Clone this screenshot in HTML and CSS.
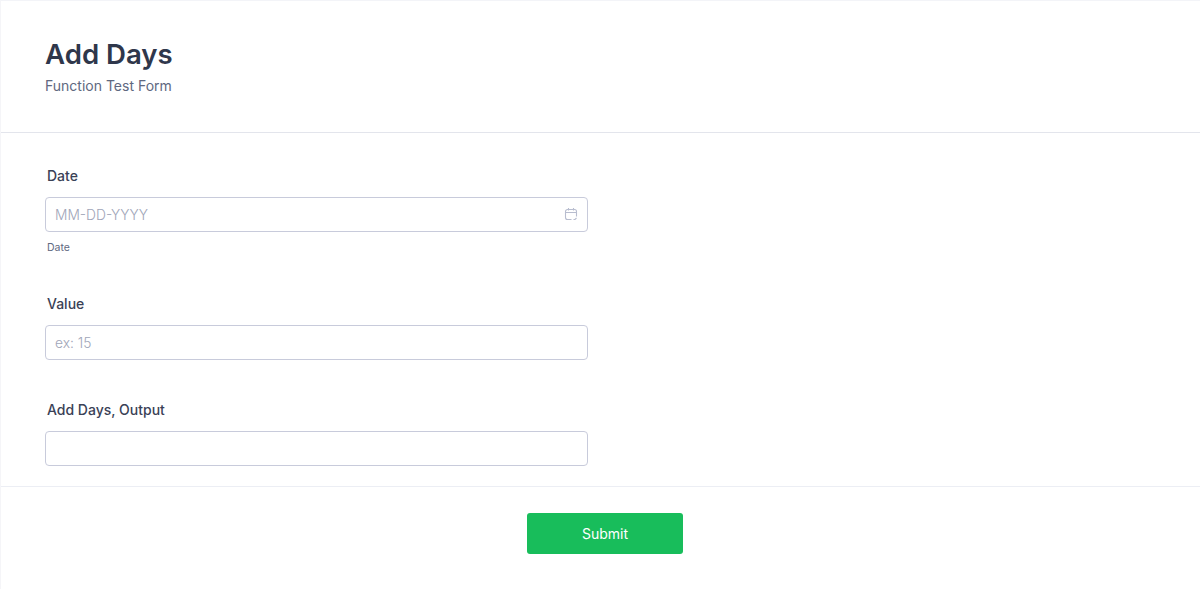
FILE: index.html
```html
<!DOCTYPE html>
<html lang="en">

<head>
    <meta charset="UTF-8">
    <meta name="viewport" content="width=device-width, initial-scale=1.0">
    <title>Add Days</title>
    <link rel="stylesheet" href="styles.css">
</head>

<body>
    <form class="form-box">
        <div class="form-header">
            <h1>Add Days</h1>
            <p>Function Test Form</p>
        </div>

        <div class="form-fields">
            <div class="field field-date">
                <label for="date">Date</label>
                <div class="input-wrap">
                    <input type="text" id="date" placeholder="MM-DD-YYYY">
                    <svg class="calendar-icon" viewBox="0 0 14 14" width="14" height="14" fill="none" stroke="#b8bdcf" stroke-width="1.1">
                        <path d="M7.5 12.5h-4a2 2 0 0 1-2-2v-6a2 2 0 0 1 2-2h7a2 2 0 0 1 2 2v5"></path>
                        <path d="M1.5 5.5h11M4.5 1v2.5M9.5 1v2.5M9.5 12.5h1.5l1.500-1.500"></path>
                    </svg>
                </div>
                <span class="sublabel">Date</span>
            </div>

            <div class="field field-value">
                <label for="value">Value</label>
                <input type="text" id="value" placeholder="ex: 15">
            </div>

            <div class="field">
                <label for="output">Add Days, Output</label>
                <input type="text" id="output">
            </div>
        </div>

        <div class="form-footer">
            <button type="button" class="submit-button">Submit</button>
        </div>
    </form>
</body>

</html>
```

FILE: styles.css
```css
* {
    box-sizing: border-box;
}

body {
    margin: 0;
    background-color: #fff;
    font-family: Inter, "Liberation Sans", sans-serif;
    color: #2c3345;
}

.form-box {
    height: 589px;
    border-left: 1px solid #f5f5f8;
    border-top: 1px solid #f3f4f8;
    overflow: hidden;
}

.form-header {
    height: 132px;
    padding: 37px 0 0 44px;
    border-bottom: 1px solid #e3e5ec;
}

.form-header h1 {
    margin: 0;
    font-size: 27.6px;
    line-height: 33px;
    font-weight: 600;
    color: #2f374b;
}

.form-header p {
    margin: 6px 0 0;
    font-size: 14px;
    line-height: 17px;
    color: #606880;
}

.form-fields {
    height: 354px;
    padding: 34px 0 0 44px;
    border-bottom: 1px solid #eceef4;
}

.field {
    width: 543px;
}

.field-date {
    margin-bottom: 41px;
}

.field-value {
    margin-bottom: 41px;
}

.field label {
    display: block;
    margin: 0 0 13px 2px;
    font-size: 14px;
    line-height: 17px;
    font-weight: 500;
    color: #3a4156;
}

.field input {
    display: block;
    width: 100%;
    height: 35px;
    padding: 0 9px;
    border: 1px solid #c8cbdb;
    border-radius: 4px;
    font-family: inherit;
    font-size: 13.8px;
    font-weight: 300;
    color: #2c3345;
}

.field input::placeholder {
    color: #a0a5b8;
}

.input-wrap {
    position: relative;
}

.calendar-icon {
    position: absolute;
    top: 10px;
    right: 10px;
}

.sublabel {
    display: block;
    margin: 9px 0 0 2px;
    font-size: 10.5px;
    line-height: 13px;
    color: #606880;
}

.form-footer {
    padding-top: 26px;
    padding-left: 526px;
}

.submit-button {
    display: block;
    width: 156px;
    height: 41px;
    border: none;
    border-radius: 3px;
    background-color: #18bd5b;
    color: #fff;
    font-family: inherit;
    font-size: 14px;
    font-weight: 400;
    cursor: pointer;
}
```
